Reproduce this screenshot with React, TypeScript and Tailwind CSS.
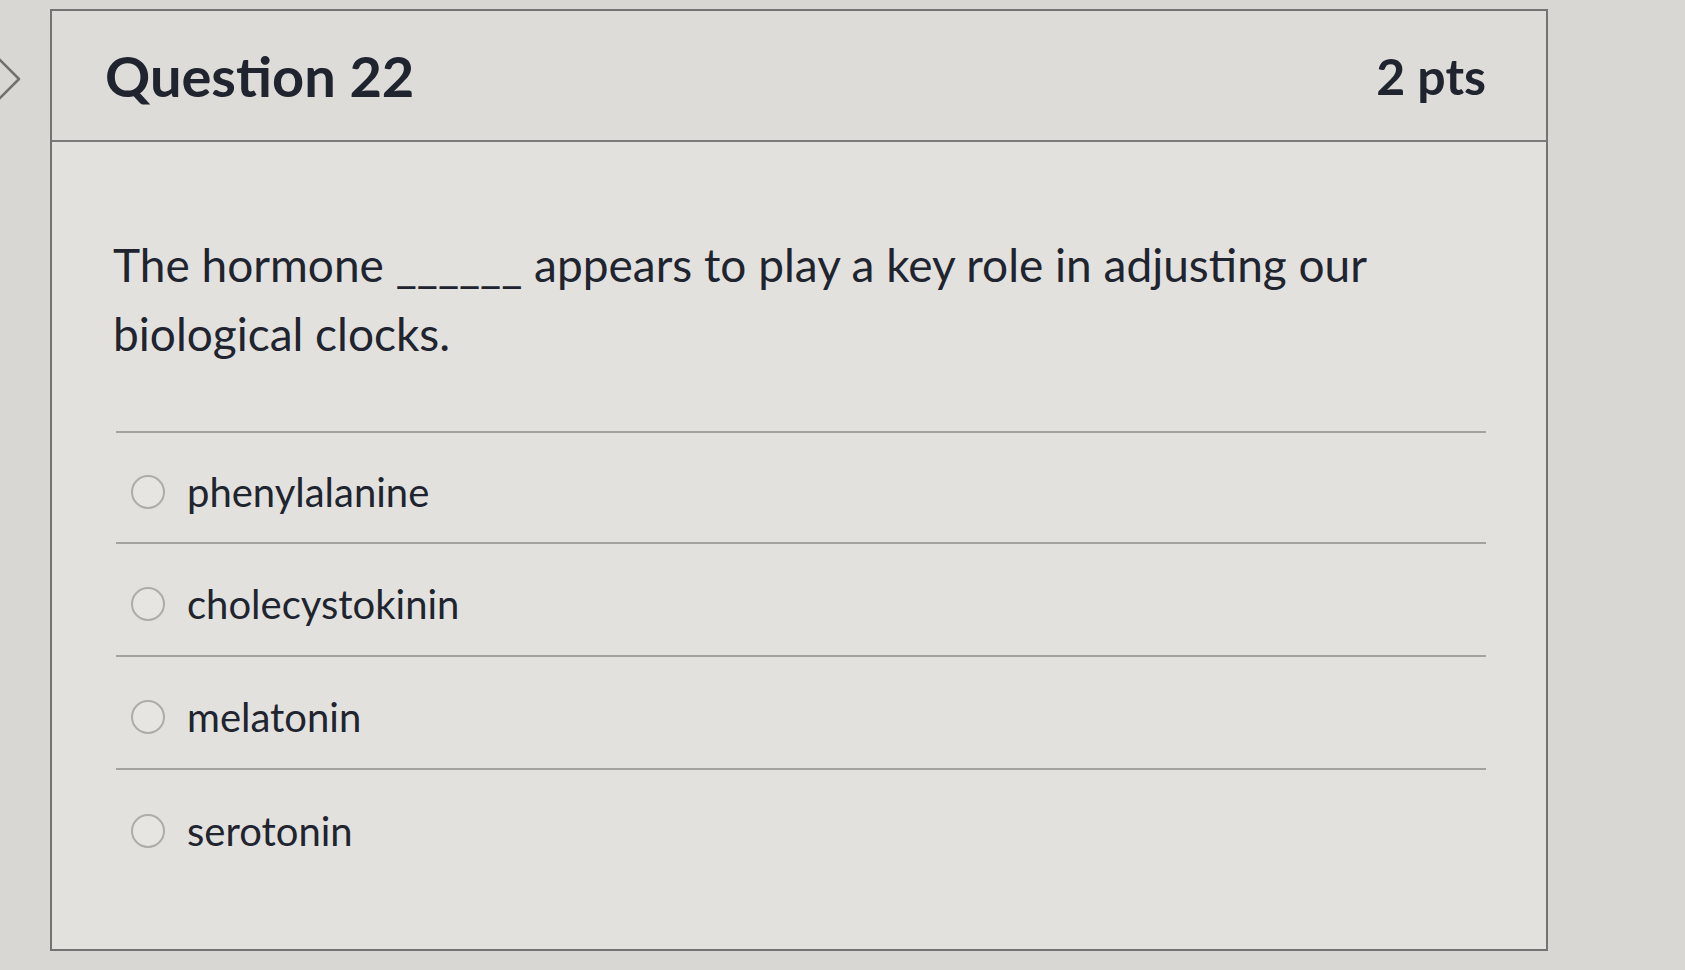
const options = ["phenylalanine", "cholecystokinin", "melatonin", "serotonin"];

function Radio() {
  return (
    <span className="block w-[34px] h-[34px] shrink-0 rounded-full border-2 border-[#adacaa] bg-[#e6e5e2]" />
  );
}

export default function App() {
  return (
    <div
      className="flex h-[970px] w-full bg-[#d8d7d3] text-[#20242e] overflow-hidden"
      style={{ fontFamily: "Lato, 'Open Sans', 'Liberation Sans', sans-serif" }}
    >
      <div className="w-[50px] shrink-0 pt-[54px]">
        <svg width="22" height="50" viewBox="0 0 22 50" fill="none">
          <polyline points="-4,2 19,25 -4,48" stroke="#707070" strokeWidth="2.5" strokeLinejoin="round" />
        </svg>
      </div>

      <div className="mt-[9px] w-[1498px] h-[942px] shrink-0 border-2 border-[#737373] bg-[#e2e1de] flex flex-col">
        <header className="h-[131px] shrink-0 flex items-center justify-between pl-[53px] pr-[60px] bg-[#dddcd9] border-b-2 border-[#7a7a7a]">
          <h2 className="text-[56px] font-bold leading-[1.2]">Question 22</h2>
          <span className="text-[50px] font-bold leading-[1.2]">2 pts</span>
        </header>

        <div className="flex-1 pl-[61px] pr-[60px] pt-[88px]">
          <p className="text-[46px] leading-[69px] pr-[40px]">
            The hormone ______ appears to play a key role in adjusting our biological clocks.
          </p>

          <div className="mt-[63px] ml-[3px]">
            {options.map((opt, i) => (
              <div
                key={opt}
                className={`h-[113px] flex items-center gap-[22px] pl-[15px] pt-[8px] ${i < options.length - 1 ? "border-b-2" : ""} ${i === 0 ? "border-t-2" : ""} border-[#a3a2a0]`}
              >
                <Radio />
                <span className="text-[40px] leading-none">{opt}</span>
              </div>
            ))}
          </div>
        </div>
      </div>
    </div>
  );
}
